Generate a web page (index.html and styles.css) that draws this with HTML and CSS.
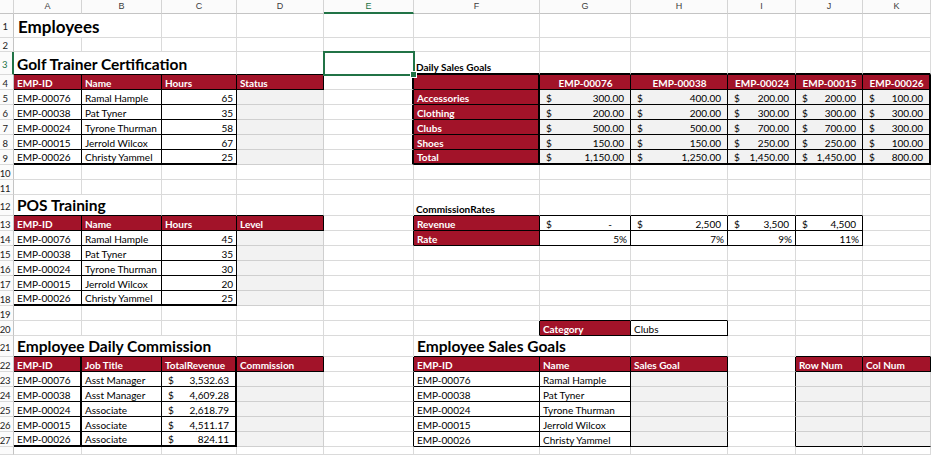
FILE: index.html
```html
<!DOCTYPE html>
<html lang="en">
<head>
<meta charset="utf-8">
<title>Employees</title>
<link rel="stylesheet" href="styles.css">
</head>
<body>
<div class="sheet">
  <!-- column headers -->
  <div class="ch corner"></div>
  <div class="ch">A</div><div class="ch">B</div><div class="ch">C</div><div class="ch">D</div>
  <div class="ch ch-sel">E</div><div class="ch">F</div><div class="ch">G</div><div class="ch">H</div>
  <div class="ch">I</div><div class="ch">J</div><div class="ch">K</div>

  <!-- row 1 -->
  <div class="rh">1</div>
  <div class="c s2 t t1">Employees</div>
  <div class="c"></div><div class="c"></div><div class="c"></div><div class="c"></div><div class="c"></div>
  <div class="c"></div><div class="c"></div><div class="c"></div><div class="c"></div>

  <!-- row 2 -->
  <div class="rh">2</div>
  <div class="c"></div><div class="c"></div><div class="c"></div><div class="c"></div><div class="c"></div>
  <div class="c"></div><div class="c"></div><div class="c"></div><div class="c"></div><div class="c"></div><div class="c"></div>

  <!-- row 3 -->
  <div class="rh rh-sel">3</div>
  <div class="c s3 t bb">Golf Trainer Certification</div>
  <div class="c bb"></div>
  <div class="c sel"></div>
  <div class="c sb bb2">Daily Sales Goals</div>
  <div class="c bb2"></div><div class="c bb2"></div><div class="c bb2"></div><div class="c bb2"></div><div class="c bb2"></div>

  <!-- row 4 -->
  <div class="rh">4</div>
  <div class="c h">EMP-ID</div><div class="c h">Name</div><div class="c h">Hours</div><div class="c h">Status</div>
  <div class="c br2"></div>
  <div class="c h br2"></div>
  <div class="c h m">EMP-00076</div><div class="c h m">EMP-00038</div><div class="c h m">EMP-00024</div>
  <div class="c h m">EMP-00015</div><div class="c h m br2">EMP-00026</div>

  <!-- row 5 -->
  <div class="rh">5</div>
  <div class="c k">EMP-00076</div><div class="c k">Ramal Hample</div><div class="c k n">65</div><div class="c g"></div>
  <div class="c br2"></div>
  <div class="c h br2">Accessories</div>
  <div class="c g k a"><span>$</span><span>300.00</span></div>
  <div class="c g k a"><span>$</span><span>400.00</span></div>
  <div class="c g k a"><span>$</span><span>200.00</span></div>
  <div class="c g k a"><span>$</span><span>200.00</span></div>
  <div class="c g k a br2"><span>$</span><span>100.00</span></div>

  <!-- row 6 -->
  <div class="rh">6</div>
  <div class="c k">EMP-00038</div><div class="c k">Pat Tyner</div><div class="c k n">35</div><div class="c g"></div>
  <div class="c br2"></div>
  <div class="c h br2">Clothing</div>
  <div class="c g k a"><span>$</span><span>200.00</span></div>
  <div class="c g k a"><span>$</span><span>200.00</span></div>
  <div class="c g k a"><span>$</span><span>300.00</span></div>
  <div class="c g k a"><span>$</span><span>300.00</span></div>
  <div class="c g k a br2"><span>$</span><span>300.00</span></div>

  <!-- row 7 -->
  <div class="rh">7</div>
  <div class="c k">EMP-00024</div><div class="c k">Tyrone Thurman</div><div class="c k n">58</div><div class="c g"></div>
  <div class="c br2"></div>
  <div class="c h br2">Clubs</div>
  <div class="c g k a"><span>$</span><span>500.00</span></div>
  <div class="c g k a"><span>$</span><span>500.00</span></div>
  <div class="c g k a"><span>$</span><span>700.00</span></div>
  <div class="c g k a"><span>$</span><span>700.00</span></div>
  <div class="c g k a br2"><span>$</span><span>300.00</span></div>

  <!-- row 8 -->
  <div class="rh">8</div>
  <div class="c k">EMP-00015</div><div class="c k">Jerrold Wilcox</div><div class="c k n">67</div><div class="c g"></div>
  <div class="c br2"></div>
  <div class="c h br2">Shoes</div>
  <div class="c g k a"><span>$</span><span>150.00</span></div>
  <div class="c g k a"><span>$</span><span>150.00</span></div>
  <div class="c g k a"><span>$</span><span>250.00</span></div>
  <div class="c g k a"><span>$</span><span>250.00</span></div>
  <div class="c g k a br2"><span>$</span><span>100.00</span></div>

  <!-- row 9 -->
  <div class="rh">9</div>
  <div class="c k bb2">EMP-00026</div><div class="c k bb2">Christy Yammel</div><div class="c k n bb2">25</div><div class="c g"></div>
  <div class="c br2"></div>
  <div class="c h br2 bb2">Total</div>
  <div class="c g k a bb2"><span>$</span><span>1,150.00</span></div>
  <div class="c g k a bb2"><span>$</span><span>1,250.00</span></div>
  <div class="c g k a bb2"><span>$</span><span>1,450.00</span></div>
  <div class="c g k a bb2"><span>$</span><span>1,450.00</span></div>
  <div class="c g k a br2 bb2"><span>$</span><span>800.00</span></div>

  <!-- row 10 -->
  <div class="rh">10</div>
  <div class="c"></div><div class="c"></div><div class="c"></div><div class="c"></div><div class="c"></div>
  <div class="c"></div><div class="c"></div><div class="c"></div><div class="c"></div><div class="c"></div><div class="c"></div>

  <!-- row 11 -->
  <div class="rh">11</div>
  <div class="c"></div><div class="c"></div><div class="c"></div><div class="c"></div><div class="c"></div>
  <div class="c"></div><div class="c"></div><div class="c"></div><div class="c"></div><div class="c"></div><div class="c"></div>

  <!-- row 12 -->
  <div class="rh">12</div>
  <div class="c s2 t bb">POS Training</div>
  <div class="c bb"></div><div class="c bb"></div>
  <div class="c"></div>
  <div class="c sb bb">CommissionRates</div>
  <div class="c bb"></div><div class="c bb"></div><div class="c bb"></div><div class="c bb"></div>
  <div class="c"></div>

  <!-- row 13 -->
  <div class="rh">13</div>
  <div class="c h">EMP-ID</div><div class="c h">Name</div><div class="c h">Hours</div><div class="c h">Level</div>
  <div class="c br"></div>
  <div class="c h">Revenue</div>
  <div class="c k a"><span>$</span><span class="dash">-</span></div>
  <div class="c k a"><span>$</span><span>2,500</span></div>
  <div class="c k a"><span>$</span><span>3,500</span></div>
  <div class="c k a"><span>$</span><span>4,500</span></div>
  <div class="c"></div>

  <!-- row 14 -->
  <div class="rh">14</div>
  <div class="c k">EMP-00076</div><div class="c k">Ramal Hample</div><div class="c k n">45</div><div class="c g"></div>
  <div class="c br"></div>
  <div class="c h">Rate</div>
  <div class="c k n">5%</div><div class="c k n">7%</div><div class="c k n">9%</div><div class="c k n">11%</div>
  <div class="c"></div>

  <!-- row 15 -->
  <div class="rh">15</div>
  <div class="c k">EMP-00038</div><div class="c k">Pat Tyner</div><div class="c k n">35</div><div class="c g"></div>
  <div class="c"></div><div class="c"></div><div class="c"></div><div class="c"></div><div class="c"></div><div class="c"></div><div class="c"></div>

  <!-- row 16 -->
  <div class="rh">16</div>
  <div class="c k">EMP-00024</div><div class="c k">Tyrone Thurman</div><div class="c k n">30</div><div class="c g"></div>
  <div class="c"></div><div class="c"></div><div class="c"></div><div class="c"></div><div class="c"></div><div class="c"></div><div class="c"></div>

  <!-- row 17 -->
  <div class="rh">17</div>
  <div class="c k">EMP-00015</div><div class="c k">Jerrold Wilcox</div><div class="c k n">20</div><div class="c g"></div>
  <div class="c"></div><div class="c"></div><div class="c"></div><div class="c"></div><div class="c"></div><div class="c"></div><div class="c"></div>

  <!-- row 18 -->
  <div class="rh">18</div>
  <div class="c k bb2">EMP-00026</div><div class="c k bb2">Christy Yammel</div><div class="c k n bb2">25</div><div class="c g"></div>
  <div class="c"></div><div class="c"></div><div class="c"></div><div class="c"></div><div class="c"></div><div class="c"></div><div class="c"></div>

  <!-- row 19 -->
  <div class="rh">19</div>
  <div class="c"></div><div class="c"></div><div class="c"></div><div class="c"></div><div class="c"></div>
  <div class="c"></div>
  <div class="c bb"></div><div class="c bb"></div>
  <div class="c"></div><div class="c"></div><div class="c"></div>

  <!-- row 20 -->
  <div class="rh">20</div>
  <div class="c"></div><div class="c"></div><div class="c"></div><div class="c"></div><div class="c"></div>
  <div class="c br"></div>
  <div class="c h">Category</div>
  <div class="c k">Clubs</div>
  <div class="c"></div><div class="c"></div><div class="c"></div>

  <!-- row 21 -->
  <div class="rh">21</div>
  <div class="c s3 t bb">Employee Daily Commission</div>
  <div class="c bb"></div>
  <div class="c"></div>
  <div class="c s2 t bb">Employee Sales Goals</div>
  <div class="c bb"></div>
  <div class="c"></div>
  <div class="c bb"></div><div class="c bb"></div>

  <!-- row 22 -->
  <div class="rh">22</div>
  <div class="c h br2">EMP-ID</div><div class="c h">Job Title</div><div class="c h br2">TotalRevenue</div><div class="c h">Commission</div>
  <div class="c br"></div>
  <div class="c h">EMP-ID</div><div class="c h">Name</div><div class="c h">Sales Goal</div>
  <div class="c br"></div>
  <div class="c h">Row Num</div><div class="c h">Col Num</div>

  <!-- row 23 -->
  <div class="rh">23</div>
  <div class="c k br2">EMP-00076</div><div class="c k">Asst Manager</div>
  <div class="c k a br2"><span>$</span><span>3,532.63</span></div><div class="c g"></div>
  <div class="c br"></div>
  <div class="c k">EMP-00076</div><div class="c k">Ramal Hample</div><div class="c g br"></div>
  <div class="c br"></div>
  <div class="c g"></div><div class="c g"></div>

  <!-- row 24 -->
  <div class="rh">24</div>
  <div class="c k br2">EMP-00038</div><div class="c k">Asst Manager</div>
  <div class="c k a br2"><span>$</span><span>4,609.28</span></div><div class="c g"></div>
  <div class="c br"></div>
  <div class="c k">EMP-00038</div><div class="c k">Pat Tyner</div><div class="c g br"></div>
  <div class="c br"></div>
  <div class="c g"></div><div class="c g"></div>

  <!-- row 25 -->
  <div class="rh">25</div>
  <div class="c k br2">EMP-00024</div><div class="c k">Associate</div>
  <div class="c k a br2"><span>$</span><span>2,618.79</span></div><div class="c g"></div>
  <div class="c br"></div>
  <div class="c k">EMP-00024</div><div class="c k">Tyrone Thurman</div><div class="c g br"></div>
  <div class="c br"></div>
  <div class="c g"></div><div class="c g"></div>

  <!-- row 26 -->
  <div class="rh">26</div>
  <div class="c k br2">EMP-00015</div><div class="c k">Associate</div>
  <div class="c k a br2"><span>$</span><span>4,511.17</span></div><div class="c g"></div>
  <div class="c br"></div>
  <div class="c k">EMP-00015</div><div class="c k">Jerrold Wilcox</div><div class="c g br"></div>
  <div class="c br"></div>
  <div class="c g"></div><div class="c g"></div>

  <!-- row 27 -->
  <div class="rh">27</div>
  <div class="c k br2 bb2">EMP-00026</div><div class="c k bb2">Associate</div>
  <div class="c k a br2 bb2"><span>$</span><span>824.11</span></div><div class="c g"></div>
  <div class="c br"></div>
  <div class="c k">EMP-00026</div><div class="c k">Christy Yammel</div><div class="c g br bb"></div>
  <div class="c br"></div>
  <div class="c g bb"></div><div class="c g bb"></div>

  <!-- row 28 -->
  <div class="rh rh-last"></div>
  <div class="c"></div><div class="c"></div><div class="c"></div><div class="c"></div><div class="c"></div>
  <div class="c"></div><div class="c"></div><div class="c"></div><div class="c"></div><div class="c"></div><div class="c"></div>
</div>
</body>
</html>
```

FILE: styles.css
```css
* {
  box-sizing: border-box;
  margin: 0;
  padding: 0;
}

html, body {
  background: #ffffff;
}

body {
  width: 931px;
  height: 455px;
  overflow: hidden;
  font-family: Lato, "Liberation Sans", sans-serif;
  font-size: 10px;
  color: #000;
}

.sheet {
  display: grid;
  grid-template-columns: 14px 68px 80px 75px 87px 90px 126px 91px 97px 68px 67px 68px;
  grid-template-rows: 14px 24px 14px 23px repeat(8, 15px) 21px repeat(8, 15px) 21px repeat(6, 15px) 8px;
  width: 931px;
}

/* column headers */
.ch {
  border-right: 1px solid #d4d4d4;
  border-bottom: 1px solid #c4c4c4;
  background: #fbfbfb;
  text-align: center;
  font-family: "Liberation Sans", sans-serif;
  font-size: 9px;
  line-height: 12px;
  color: #3c3c3c;
}

.ch-sel {
  border-bottom: 2px solid #217346;
  color: #217346;
}

/* row headers */
.rh {
  display: flex;
  justify-content: center;
  align-items: center;
  padding: 2px 3px 0 0;
  border-right: 1px solid #c4c4c4;
  border-bottom: 1px solid #dadada;
  background: #fbfbfb;
  font-size: 9.5px;
  letter-spacing: -0.3px;
  color: #222;
  white-space: nowrap;
}

.rh-sel {
  border-right: 2px solid #217346;
  color: #217346;
}

/* cells */
.c {
  display: flex;
  align-items: flex-end;
  min-width: 0;
  padding: 0 2px 0 3px;
  border-right: 1px solid #dadada;
  border-bottom: 1px solid #dadada;
  white-space: nowrap;
  line-height: 12px;
}

.s2 { grid-column: span 2; }
.s3 { grid-column: span 3; }

.t {
  font-size: 15.5px;
  font-weight: 700;
  line-height: 19px;
  padding-left: 3px;
}

.t1 {
  font-size: 17px;
  line-height: 21px;
  padding-left: 4px;
}

.sb {
  font-weight: 700;
  padding-left: 2px;
}

.h {
  background: #a21329;
  color: #fff;
  font-weight: 700;
  border-right-color: #000;
  border-bottom-color: #000;
}

.k {
  border-right-color: #000;
  border-bottom-color: #000;
}

.g {
  background: #f2f2f2;
  border-right-color: #cfcfcf;
  border-bottom-color: #cfcfcf;
}

.g.k {
  border-right-color: #000;
  border-bottom-color: #000;
}

.n {
  justify-content: flex-end;
  padding-right: 3px;
}

.m {
  justify-content: center;
}

.a {
  justify-content: space-between;
  padding: 0 6px 0 6px;
}

.dash {
  padding-right: 12px;
}

.br { border-right-color: #000; }
.br2 { border-right: 2px solid #000; }
.bb { border-bottom-color: #000; }
.bb2 { border-bottom: 2px solid #000; }

/* active cell */
.sel {
  position: relative;
  outline: 2px solid #217346;
  outline-offset: -1px;
}

.sel::after {
  content: "";
  position: absolute;
  right: -4px;
  bottom: -4px;
  width: 5px;
  height: 5px;
  background: #217346;
  border: 1px solid #fff;
  box-sizing: content-box;
}
```
